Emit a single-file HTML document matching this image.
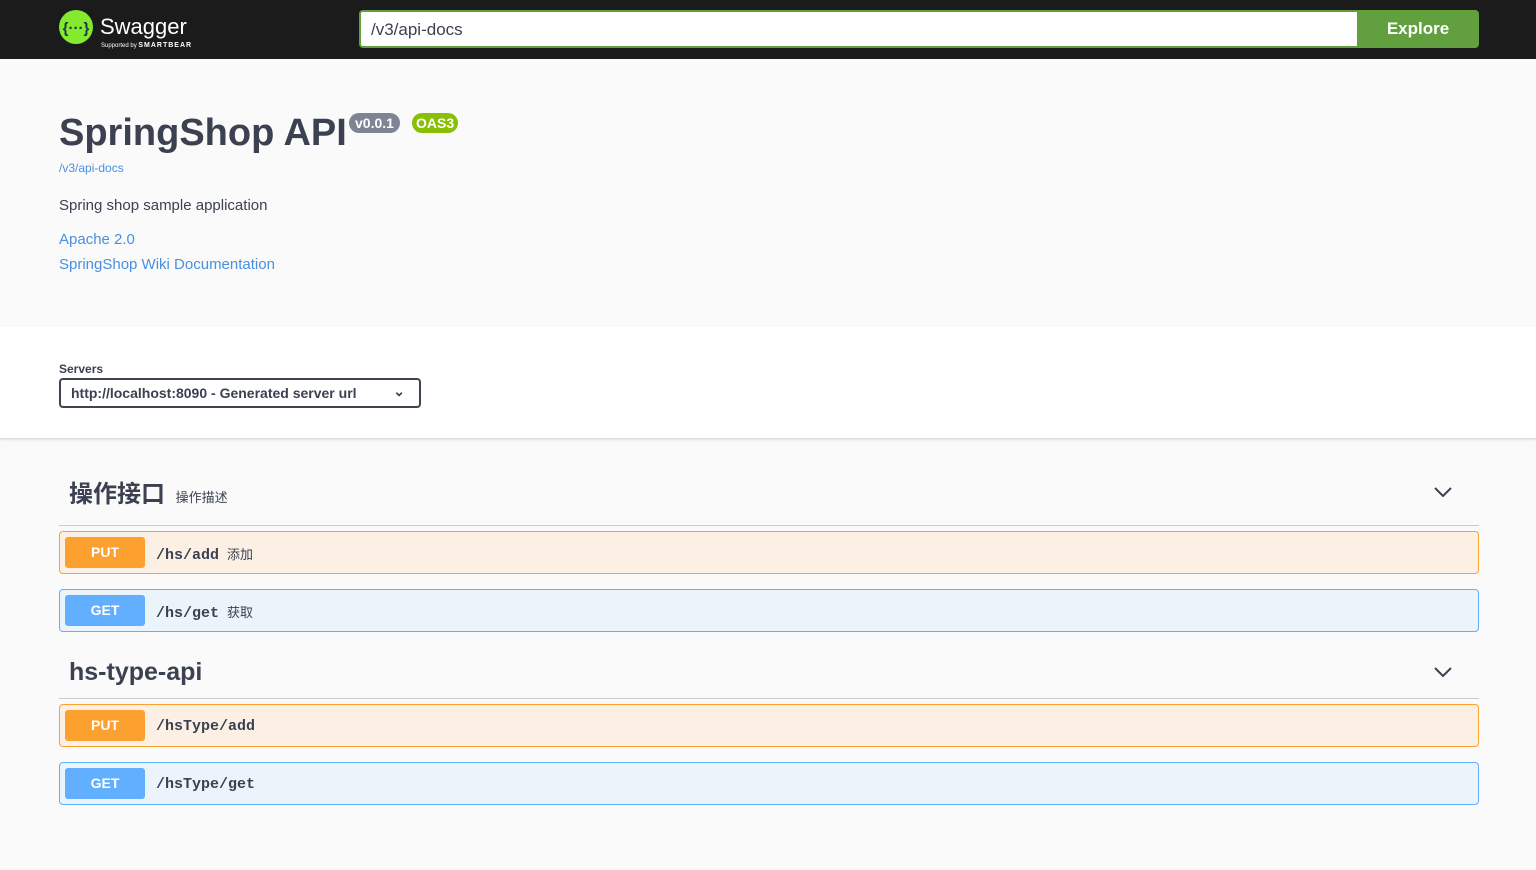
<!DOCTYPE html>
<html><head><meta charset="utf-8"><style>
*{box-sizing:border-box}
body{margin:0;width:1536px;height:870px;background:#fafafa;font-family:"Liberation Sans","Noto Sans CJK SC",sans-serif;color:#3b4151;overflow:hidden}
.top{height:59px;background:#1b1b1b;position:relative}
.logo{position:absolute;left:59px;top:10px}
.url{position:absolute;left:359px;top:10px;width:998px;height:38px;border:2px solid #62a03f;border-right:none;border-radius:4px 0 0 4px;background:#fff;font-size:17px;padding:8px 10px;color:#3b4151}
.btn{position:absolute;left:1357px;top:10px;width:122px;height:38px;background:#62a03f;color:#fff;font-weight:bold;font-size:17px;text-align:center;line-height:38px;border-radius:0 4px 4px 0}
.info{position:absolute;left:59px;top:112px}
h1{margin:0;font-size:38px;font-weight:bold;color:#3b4151;display:inline-block}
.badge{display:inline-block;position:absolute;top:1px;color:#fff;font-weight:bold;font-size:14px;border-radius:12px;padding:2px 6px}
a{color:#4990e2;text-decoration:none}
.servers{position:absolute;left:0;top:327px;width:1536px;height:112px;background:#fff;border-bottom:1px solid #ddd;box-shadow:0 1px 2px rgba(0,0,0,.1)}
.sel{position:absolute;left:59px;top:51px;width:362px;height:30px;border:2px solid #41444e;border-radius:4px;font-weight:bold;font-size:14px;padding:5px 10px;color:#3b4151}
.tag{position:absolute;left:59px;width:1420px;border-bottom:1px solid #ccc}
.tag .t{position:absolute;left:10px;font-size:24px;font-weight:bold}
.chev{position:absolute;right:26px}
.op{position:absolute;left:59px;width:1420px;height:43px;border:1px solid;border-radius:4px}
.put{background:#fcf0e5;border-color:#fca130}
.get{background:#ebf3fb;border-color:#61affe}
.m{position:absolute;left:5px;top:5px;width:80px;height:31px;border-radius:3px;color:#fff;font-weight:bold;font-size:14px;text-align:center;line-height:31px}
.p{position:absolute;left:96px;top:12px;font-family:"Liberation Mono","Noto Sans CJK SC",monospace;font-weight:bold;font-size:15px;color:#3b4151}
.d{font-family:"Liberation Sans","Noto Sans CJK SC",sans-serif;font-weight:normal;font-size:13px;margin-left:8px}
</style></head><body>
<div class="top">
 <div class="logo"><svg width="160" height="40"><circle cx="17" cy="17" r="17" fill="#85ea2d"/><text x="17" y="23" text-anchor="middle" font-size="15" font-weight="bold" fill="#173647" font-family="Liberation Sans">{···}</text><text x="41" y="24" font-size="22" fill="#fff" font-family="Liberation Sans">Swagger</text><text x="42" y="37" font-size="6" fill="#fff" font-family="Liberation Sans">Supported by <tspan font-weight="bold" font-size="7" letter-spacing="1">SMARTBEAR</tspan></text></svg></div>
 <div class="url">/v3/api-docs</div><div class="btn">Explore</div>
</div>
<div class="info">
 <h1>SpringShop API</h1>
 <span class="badge" style="left:290px;background:#7d8492">v0.0.1</span>
 <span class="badge" style="left:353px;background:#89bf04;padding:2px 4px">OAS3</span>
 <div style="font-size:12px;margin-top:6px"><a>/v3/api-docs</a></div>
 <div style="font-size:15px;margin-top:22px">Spring shop sample application</div>
 <div style="font-size:15px;margin-top:17px"><a>Apache 2.0</a></div>
 <div style="font-size:15px;margin-top:8px"><a>SpringShop Wiki Documentation</a></div>
</div>
<div class="servers">
 <div style="position:absolute;left:59px;top:35px;font-size:12px;font-weight:bold">Servers</div>
 <div class="sel">http://localhost:8090 - Generated server url <span style="position:absolute;right:14px;top:3px">⌄</span></div>
</div>
<div class="tag" style="top:466px;height:60px"><span class="t" style="top:8px">操作接口 <span style="font-size:13px;font-weight:normal;margin-left:4px">操作描述</span></span>
<svg class="chev" style="top:16px" width="20" height="20"><path d="M2 6l8 8 8-8" fill="none" stroke="#3b4151" stroke-width="2"/></svg></div>
<div class="op put" style="top:531px"><div class="m" style="background:#fca130">PUT</div><div class="p">/hs/add<span class="d">添加</span></div></div>
<div class="op get" style="top:589px"><div class="m" style="background:#61affe">GET</div><div class="p">/hs/get<span class="d">获取</span></div></div>
<div class="tag" style="top:648px;height:51px"><span class="t" style="top:10px;font-size:25px">hs-type-api</span>
<svg class="chev" style="top:14px" width="20" height="20"><path d="M2 6l8 8 8-8" fill="none" stroke="#3b4151" stroke-width="2"/></svg></div>
<div class="op put" style="top:704px"><div class="m" style="background:#fca130">PUT</div><div class="p" style="top:13px">/hsType/add</div></div>
<div class="op get" style="top:762px"><div class="m" style="background:#61affe">GET</div><div class="p" style="top:13px">/hsType/get</div></div>
</body></html>
